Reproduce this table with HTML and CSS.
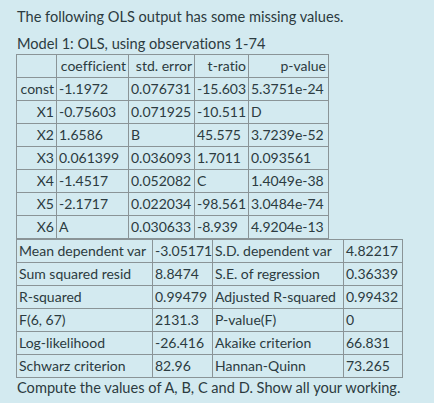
FILE: index.html
```html
<!DOCTYPE html>
<html>
<head>
<meta charset="utf-8">
<link rel="stylesheet" href="styles.css">
</head>
<body>
<div class="page">
  <p class="intro">The following OLS output has some missing values.</p>
  <p class="model">Model 1: OLS, using observations 1-74</p>
  <table class="coef">
    <colgroup><col class="c1"><col class="c2"><col class="c3"><col class="c4"><col class="c5"></colgroup>
    <tr class="head"><td></td><td class="r">coefficient</td><td class="r">std. error</td><td class="r">t-ratio</td><td class="r">p-value</td></tr>
    <tr><td class="r">const</td><td>-1.1972</td><td>0.076731</td><td>-15.603</td><td>5.3751e-24</td></tr>
    <tr><td class="r">X1</td><td>-0.75603</td><td>0.071925</td><td>-10.511</td><td>D</td></tr>
    <tr><td class="r">X2</td><td>1.6586</td><td>B</td><td>45.575</td><td>3.7239e-52</td></tr>
    <tr><td class="r">X3</td><td>0.061399</td><td>0.036093</td><td>1.7011</td><td>0.093561</td></tr>
    <tr><td class="r">X4</td><td>-1.4517</td><td>0.052082</td><td>C</td><td>1.4049e-38</td></tr>
    <tr><td class="r">X5</td><td>-2.1717</td><td>0.022034</td><td>-98.561</td><td>3.0484e-74</td></tr>
    <tr><td class="r">X6</td><td>A</td><td>0.030633</td><td>-8.939</td><td>4.9204e-13</td></tr>
  </table>
  <table class="stats">
    <colgroup><col class="s1"><col class="s2"><col class="s3"><col class="s4"></colgroup>
    <tr><td>Mean dependent var</td><td>-3.05171</td><td>S.D. dependent var</td><td>4.82217</td></tr>
    <tr><td>Sum squared resid</td><td>8.8474</td><td>S.E. of regression</td><td>0.36339</td></tr>
    <tr><td>R-squared</td><td>0.99479</td><td>Adjusted R-squared</td><td>0.99432</td></tr>
    <tr><td>F(6, 67)</td><td>2131.3</td><td>P-value(F)</td><td>0</td></tr>
    <tr><td>Log-likelihood</td><td>-26.416</td><td>Akaike criterion</td><td>66.831</td></tr>
    <tr><td>Schwarz criterion</td><td>82.96</td><td>Hannan-Quinn</td><td>73.265</td></tr>
  </table>
  <p class="task">Compute the values of A, B, C and D. Show all your working.</p>
</div>
</body>
</html>
```
FILE: styles.css
```css
html, body {
  margin: 0;
  padding: 0;
  background: #d3eaf0;
}
.page {
  width: 434px;
  height: 403px;
  padding: 7px 0 0 17px;
  box-sizing: border-box;
  font-family: "Lato", "DejaVu Sans", sans-serif;
  font-size: 14.6px;
  font-variant-ligatures: none;
  color: #2c3b40;
  background: #d3eaf0;
}
.intro {
  margin: 0;
  line-height: 20px;
}
.model {
  margin: 7px 0 0 0;
  line-height: 20px;
}
table {
  border-collapse: collapse;
  table-layout: fixed;
  margin-left: -1px;
  border: 1px solid #2d3436;
  font-size: 14px;
}
td {
  border: 1px solid #8a9497;
  height: 22px;
  padding: 0 0 0 2px;
  white-space: nowrap;
  overflow: hidden;
  line-height: 22px;
}
td.r {
  text-align: right;
  padding: 0 2px 0 0;
}
.coef { width: 313px; }
.c1 { width: 40px; }
.c2 { width: 72px; }
.c3 { width: 66px; }
.c4 { width: 54px; }
.c5 { width: 80px; }
.stats { width: 387px; }
.s1 { width: 136px; }
.s2 { width: 60px; }
.s3 { width: 131px; }
.s4 { width: 59px; }
.task {
  margin: 0;
  line-height: 20px;
}
```
